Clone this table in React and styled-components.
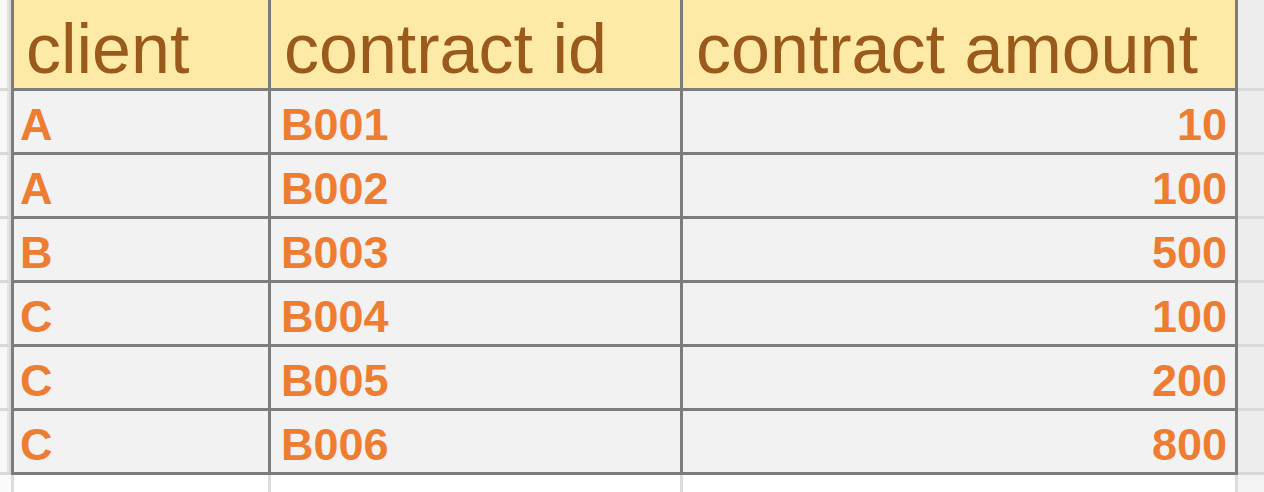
import styled, { createGlobalStyle } from "styled-components";

const GlobalStyle = createGlobalStyle`
	html, body {
		margin: 0;
		padding: 0;
		background: #ffffff;
		overflow: hidden;
	}
`;

const headers = ["client", "contract id", "contract amount"];

const rows = [
	["A", "B001", "10"],
	["A", "B002", "100"],
	["B", "B003", "500"],
	["C", "B004", "100"],
	["C", "B005", "200"],
	["C", "B006", "800"],
];

const columns = "254px 409px 552px";
const rowTemplate = "88px repeat(6, 61px)";

const App = () => {
	return (
		<>
			<GlobalStyle />
			<Page>
				<Top>
					<Gutter $side="left">
						{Array.from({ length: 7 }).map((_, i) => (
							<GutterCell key={i} $side="left" />
						))}
					</Gutter>
					<Sheet>
						{headers.map((h, i) => (
							<HeaderCell key={h} $pad={i === 0 ? 12 : 13}>
								{h}
							</HeaderCell>
						))}
						{rows.map((row, r) =>
							row.map((value, c) => (
								<Cell
									key={`${r}-${c}`}
									$align={c === 2 ? "right" : "left"}
									$pad={c === 0 ? 6 : c === 1 ? 10 : 8}
								>
									{value}
								</Cell>
							))
						)}
					</Sheet>
					<Gutter $side="right">
						{Array.from({ length: 7 }).map((_, i) => (
							<GutterCell key={i} $side="right" />
						))}
					</Gutter>
				</Top>
				<GhostRow>
					<GhostEdge />
					<GhostCells>
						<GhostCell />
						<GhostCell />
						<GhostCell />
					</GhostCells>
					<GhostEdge $right />
				</GhostRow>
			</Page>
		</>
	);
};

const Page = styled.div`
	width: 1264px;
	height: 492px;
	overflow: hidden;
	background: #ffffff;
	display: flex;
	flex-direction: column;
`;

const Top = styled.div`
	display: flex;
	align-items: flex-start;
`;

const Gutter = styled.div`
	display: grid;
	grid-template-rows: ${rowTemplate};
	row-gap: 3px;
	padding-bottom: 3px;
	background: #d9d9d9;
	flex: ${(p) => (p.$side === "left" ? "0 0 11px" : "1 1 auto")};
`;

const GutterCell = styled.div`
	background: ${(p) => (p.$side === "left" ? "#f7f7f7" : "#ededed")};
	border-right: ${(p) => (p.$side === "left" ? "2px solid #e4e4e4" : "none")};
	margin-right: ${(p) => (p.$side === "left" ? "2px" : "0")};
`;

const Sheet = styled.div`
	display: grid;
	grid-template-columns: ${columns};
	grid-template-rows: ${rowTemplate};
	gap: 3px;
	padding: 0 3px 3px 3px;
	background: #7c7c7c;
	flex: 0 0 auto;
`;

const HeaderCell = styled.div`
	background: #fdeaa6;
	color: #9a5a1c;
	font-family: "Liberation Sans", Arial, sans-serif;
	font-size: 70px;
	line-height: 1.12;
	display: flex;
	align-items: flex-end;
	padding-left: ${(p) => p.$pad}px;
	white-space: nowrap;
	overflow: hidden;
`;

const Cell = styled.div`
	background: #f2f2f2;
	color: #ee7d31;
	font-family: "Liberation Sans", Arial, sans-serif;
	font-weight: 700;
	font-size: 45px;
	line-height: 1;
	padding-top: 11px;
	padding-left: ${(p) => (p.$align === "left" ? p.$pad : 0)}px;
	padding-right: ${(p) => (p.$align === "right" ? p.$pad : 0)}px;
	text-align: ${(p) => p.$align};
	white-space: nowrap;
`;

const GhostRow = styled.div`
	display: flex;
	flex: 1 1 auto;
`;

const GhostEdge = styled.div`
	flex: ${(p) => (p.$right ? "1 1 auto" : "0 0 11px")};
	background: ${(p) => (p.$right ? "#f3f3f3" : "#fbfbfb")};
`;

const GhostCells = styled.div`
	display: grid;
	grid-template-columns: ${columns};
	column-gap: 3px;
	padding: 0 3px;
	background: #dcdcdc;
`;

const GhostCell = styled.div`
	background: #ffffff;
`;

export default App;
